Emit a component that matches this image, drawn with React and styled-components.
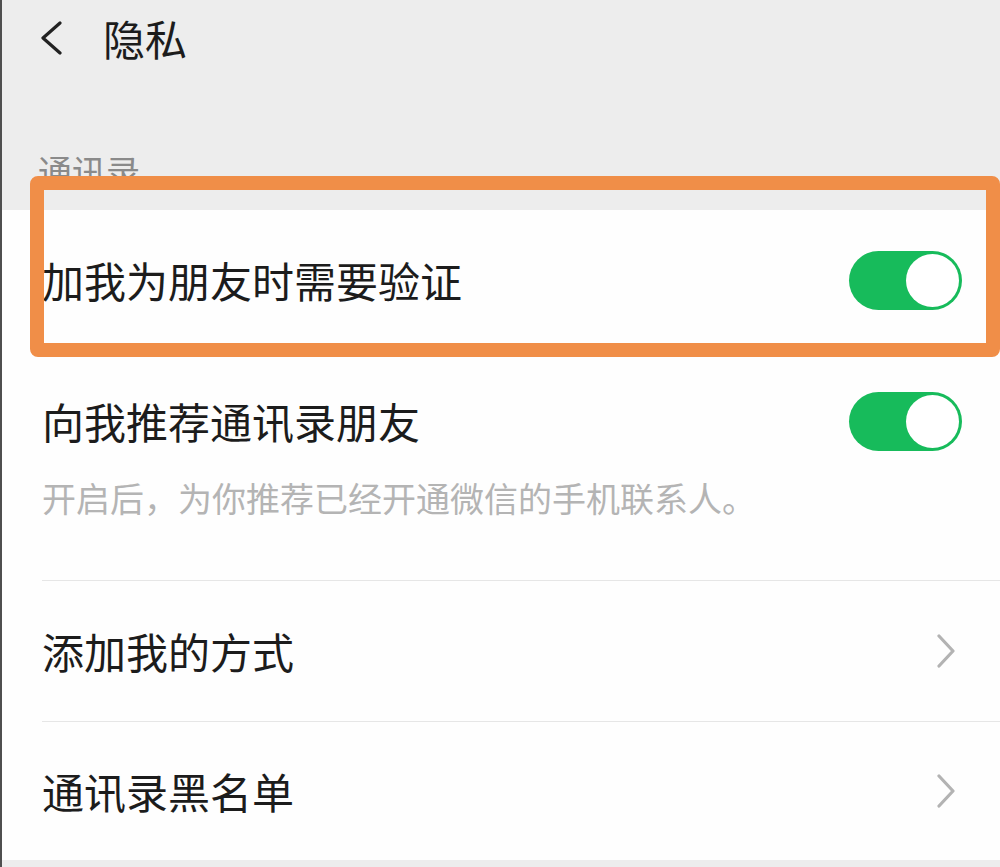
import styled, { createGlobalStyle } from "styled-components";

const GlobalStyle = createGlobalStyle`
  html, body {
    margin: 0;
    padding: 0;
    background: #ededed;
  }
  * { box-sizing: border-box; }
`;

const FONT = `"Noto Sans CJK SC", "Noto Sans", sans-serif`;

function BackIcon() {
  return (
    <svg width="26" height="34" viewBox="0 0 26 34">
      <path d="M22 2 L5 17 L22 32" fill="none" stroke="#222" strokeWidth="3.2" strokeLinecap="round" strokeLinejoin="round" />
    </svg>
  );
}

function ChevronIcon() {
  return (
    <svg width="20" height="34" viewBox="0 0 20 34">
      <path d="M3 2 L17 17 L3 32" fill="none" stroke="#b3b3b3" strokeWidth="3.2" strokeLinecap="round" strokeLinejoin="round" />
    </svg>
  );
}

function Switch({ on = true }) {
  return (
    <Toggle $on={on}>
      <Knob />
    </Toggle>
  );
}

export default function App() {
  return (
    <Page>
      <GlobalStyle />
      <TopBar>
        <BackIcon />
        <Title>隐私</Title>
      </TopBar>
      <SectionLabel>通讯录</SectionLabel>
      <List>
        <Row $height={140}>
          <Label>加我为朋友时需要验证</Label>
          <Switch on />
        </Row>
        <Block>
          <BlockHead>
            <Label>向我推荐通讯录朋友</Label>
            <Switch on />
          </BlockHead>
          <Desc>开启后，为你推荐已经开通微信的手机联系人。</Desc>
        </Block>
        <Divider />
        <Row $height={140} $arrow>
          <Label>添加我的方式</Label>
          <ChevronIcon />
        </Row>
        <Divider />
        <Row $height={138} $arrow>
          <Label>通讯录黑名单</Label>
          <ChevronIcon />
        </Row>
      </List>
      <Highlight />
    </Page>
  );
}

const Page = styled.div`
  position: relative;
  width: 100%;
  height: 867px;
  overflow: hidden;
  background: #ededed;
  border-left: 2px solid #4f4f4f;
  font-family: ${FONT};
`;

const TopBar = styled.div`
  display: flex;
  align-items: center;
  gap: 39px;
  height: 76px;
  padding-left: 36px;
`;

const Title = styled.div`
  font-size: 42px;
  line-height: 1;
  color: #1c1c1c;
`;

const SectionLabel = styled.div`
  display: flex;
  align-items: flex-end;
  height: 134px;
  padding: 0 0 22px 36px;
  font-size: 34px;
  line-height: 1;
  color: #8a8a8a;
`;

const List = styled.div`
  background: #fefefe;
`;

const Row = styled.div`
  display: flex;
  align-items: center;
  justify-content: space-between;
  height: ${(p) => p.$height}px;
  padding: 0 ${(p) => (p.$arrow ? 44 : 38)}px 0 40px;
`;

const Block = styled.div`
  padding: 40px 38px 58px 40px;
`;

const BlockHead = styled.div`
  display: flex;
  align-items: center;
  justify-content: space-between;
  height: 62px;
`;

const Label = styled.div`
  font-size: 42px;
  line-height: 1;
  color: #1c1c1c;
`;

const Desc = styled.div`
  margin-top: 22px;
  font-size: 34px;
  line-height: 48px;
  color: #b4b4b4;
`;

const Divider = styled.div`
  height: 1px;
  margin-left: 40px;
  background: #e6e6e6;
`;

const Toggle = styled.span`
  display: flex;
  justify-content: ${(p) => (p.$on ? "flex-end" : "flex-start")};
  align-items: center;
  width: 113px;
  height: 59px;
  padding: 3px;
  border-radius: 30px;
  background: ${(p) => (p.$on ? "#17bb5b" : "#e5e5e5")};
`;

const Knob = styled.span`
  width: 53px;
  height: 53px;
  border-radius: 50%;
  background: #fff;
`;

const Highlight = styled.div`
  position: absolute;
  left: 28px;
  top: 176px;
  right: 0;
  height: 181px;
  border: 14px solid #f08e48;
  border-radius: 8px;
  pointer-events: none;
`;
